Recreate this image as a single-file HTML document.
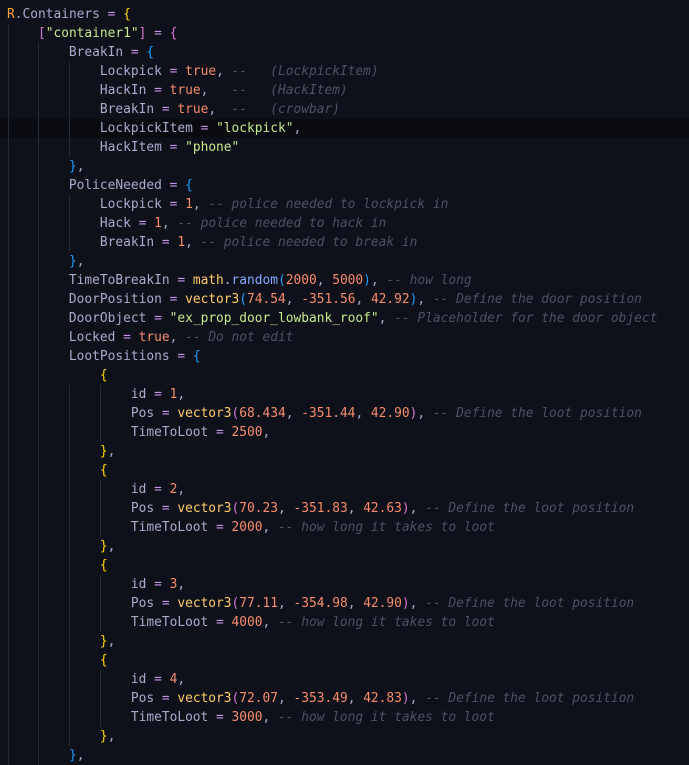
<!DOCTYPE html>
<html><head><style>
html,body{margin:0;padding:0;background:#0f111a;width:689px;height:765px;overflow:hidden}
pre{margin:0;position:absolute;left:7px;top:5px;font-family:"DejaVu Sans Mono","Liberation Mono",monospace;font-size:12.87px;line-height:19px;color:#a6accd}
.hl{position:absolute;left:0;top:119px;width:689px;height:19px;background:#090b10}
.g{position:absolute;width:1px;background:#262936}
.o{color:#c792ea}.n{color:#f78c6c}.s{color:#c3e88d}.f{color:#ffcb6b}.m{color:#82aaff}
.c{color:#4b5063;font-style:italic}.y{color:#ffd700}.p{color:#da70d6}.b{color:#179fff}.r{color:#f3a33d}
</style></head><body>
<div class="hl"></div>
<div class="g" style="left:8px;top:24px;height:741px"></div>
<div class="g" style="left:38px;top:43px;height:722px"></div>
<div class="g" style="left:69px;top:62px;height:95px"></div>
<div class="g" style="left:69px;top:195px;height:57px"></div>
<div class="g" style="left:69px;top:385px;height:361px"></div>
<div class="g" style="left:100px;top:385px;height:57px"></div>
<div class="g" style="left:100px;top:480px;height:57px"></div>
<div class="g" style="left:100px;top:575px;height:57px"></div>
<div class="g" style="left:100px;top:670px;height:57px"></div>
<pre><span class="r">R</span>.Containers <span class="o">=</span> <span class="y">{</span>
    <span class="p">[</span><span class="s">"container1"</span><span class="p">]</span> <span class="o">=</span> <span class="p">{</span>
        BreakIn <span class="o">=</span> <span class="b">{</span>
            Lockpick <span class="o">=</span> <span class="n">true</span>, <span class="c">--   (LockpickItem)</span>
            HackIn <span class="o">=</span> <span class="n">true</span>,   <span class="c">--   (HackItem)</span>
            BreakIn <span class="o">=</span> <span class="n">true</span>,  <span class="c">--   (crowbar)</span>
            LockpickItem <span class="o">=</span> <span class="s">"lockpick"</span>,
            HackItem <span class="o">=</span> <span class="s">"phone"</span>
        <span class="b">}</span>,
        PoliceNeeded <span class="o">=</span> <span class="b">{</span>
            Lockpick <span class="o">=</span> <span class="n">1</span>, <span class="c">-- police needed to lockpick in</span>
            Hack <span class="o">=</span> <span class="n">1</span>, <span class="c">-- police needed to hack in</span>
            BreakIn <span class="o">=</span> <span class="n">1</span>, <span class="c">-- police needed to break in</span>
        <span class="b">}</span>,
        TimeToBreakIn <span class="o">=</span> <span class="f">math</span>.<span class="m">random</span><span class="b">(</span><span class="n">2000</span>, <span class="n">5000</span><span class="b">)</span>, <span class="c">-- how long</span>
        DoorPosition <span class="o">=</span> <span class="f">vector3</span><span class="b">(</span><span class="n">74.54</span>, <span class="n">-351.56</span>, <span class="n">42.92</span><span class="b">)</span>, <span class="c">-- Define the door position</span>
        DoorObject <span class="o">=</span> <span class="s">"ex_prop_door_lowbank_roof"</span>, <span class="c">-- Placeholder for the door object</span>
        Locked <span class="o">=</span> <span class="n">true</span>, <span class="c">-- Do not edit</span>
        LootPositions <span class="o">=</span> <span class="b">{</span>
            <span class="y">{</span>
                id <span class="o">=</span> <span class="n">1</span>,
                Pos <span class="o">=</span> <span class="f">vector3</span><span class="p">(</span><span class="n">68.434</span>, <span class="n">-351.44</span>, <span class="n">42.90</span><span class="p">)</span>, <span class="c">-- Define the loot position</span>
                TimeToLoot <span class="o">=</span> <span class="n">2500</span>,
            <span class="y">}</span>,
            <span class="y">{</span>
                id <span class="o">=</span> <span class="n">2</span>,
                Pos <span class="o">=</span> <span class="f">vector3</span><span class="p">(</span><span class="n">70.23</span>, <span class="n">-351.83</span>, <span class="n">42.63</span><span class="p">)</span>, <span class="c">-- Define the loot position</span>
                TimeToLoot <span class="o">=</span> <span class="n">2000</span>, <span class="c">-- how long it takes to loot</span>
            <span class="y">}</span>,
            <span class="y">{</span>
                id <span class="o">=</span> <span class="n">3</span>,
                Pos <span class="o">=</span> <span class="f">vector3</span><span class="p">(</span><span class="n">77.11</span>, <span class="n">-354.98</span>, <span class="n">42.90</span><span class="p">)</span>, <span class="c">-- Define the loot position</span>
                TimeToLoot <span class="o">=</span> <span class="n">4000</span>, <span class="c">-- how long it takes to loot</span>
            <span class="y">}</span>,
            <span class="y">{</span>
                id <span class="o">=</span> <span class="n">4</span>,
                Pos <span class="o">=</span> <span class="f">vector3</span><span class="p">(</span><span class="n">72.07</span>, <span class="n">-353.49</span>, <span class="n">42.83</span><span class="p">)</span>, <span class="c">-- Define the loot position</span>
                TimeToLoot <span class="o">=</span> <span class="n">3000</span>, <span class="c">-- how long it takes to loot</span>
            <span class="y">}</span>,
        <span class="b">}</span>,
</pre>
</body></html>
